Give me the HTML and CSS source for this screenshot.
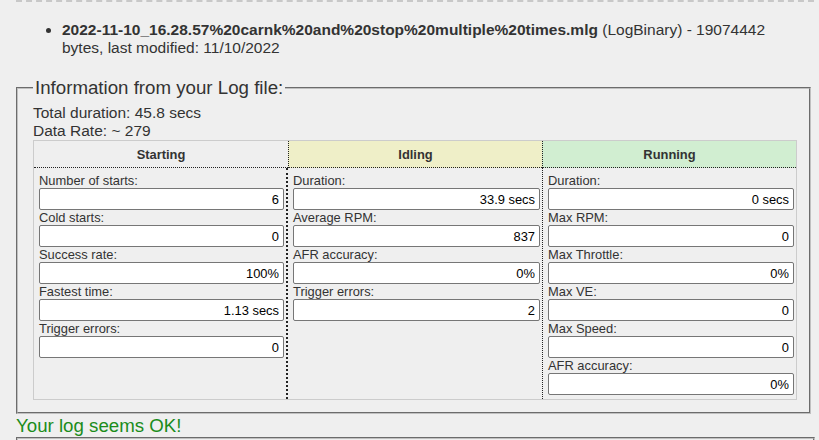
FILE: index.html
```html
<!DOCTYPE html>
<html lang="en">
<head>
<meta charset="utf-8">
<title>Log file information</title>
<link rel="stylesheet" href="styles.css">
</head>
<body>
<div class="page">
  <div class="prev"></div>
  <ul class="files">
    <li><b>2022-11-10_16.28.57%20carnk%20and%20stop%20multiple%20times.mlg</b> (LogBinary) - 19074442 bytes, last modified: 11/10/2022</li>
  </ul>
  <fieldset class="info">
    <legend>Information from your Log file:</legend>
    <div class="summary">Total duration: 45.8 secs<br>Data Rate: ~ 279</div>
    <table class="stats">
      <thead>
        <tr>
          <th class="c-start">Starting</th>
          <th class="c-idle">Idling</th>
          <th class="c-run">Running</th>
        </tr>
      </thead>
      <tbody>
        <tr>
          <td class="c-start">
            <label class="field">Number of starts:<input type="text" readonly value="6"></label>
            <label class="field">Cold starts:<input type="text" readonly value="0"></label>
            <label class="field">Success rate:<input type="text" readonly value="100%"></label>
            <label class="field">Fastest time:<input type="text" readonly value="1.13 secs"></label>
            <label class="field">Trigger errors:<input type="text" readonly value="0"></label>
          </td>
          <td class="c-idle">
            <label class="field">Duration:<input type="text" readonly value="33.9 secs"></label>
            <label class="field">Average RPM:<input type="text" readonly value="837"></label>
            <label class="field">AFR accuracy:<input type="text" readonly value="0%"></label>
            <label class="field">Trigger errors:<input type="text" readonly value="2"></label>
          </td>
          <td class="c-run">
            <label class="field">Duration:<input type="text" readonly value="0 secs"></label>
            <label class="field">Max RPM:<input type="text" readonly value="0"></label>
            <label class="field">Max Throttle:<input type="text" readonly value="0%"></label>
            <label class="field">Max VE:<input type="text" readonly value="0"></label>
            <label class="field">Max Speed:<input type="text" readonly value="0"></label>
            <label class="field">AFR accuracy:<input type="text" readonly value="0%"></label>
          </td>
        </tr>
      </tbody>
    </table>
  </fieldset>
  <p class="ok">Your log seems OK!</p>
  <div class="next"></div>
</div>
</body>
</html>
```

FILE: styles.css
```css
html, body {
  margin: 0;
  padding: 0;
}

body {
  background: #efefef;
  font-family: "Liberation Sans", Arial, sans-serif;
  font-size: 15.5px;
  line-height: 18px;
  color: #333;
  overflow: hidden;
}

.page {
  padding: 0 8px 0 16px;
}

.prev {
  height: 0;
  border-bottom: 2px dashed #c8c8c8;
  margin-right: -3px;
}

.files {
  margin: 19px 0 20px;
  padding-left: 46px;
  padding-right: 30px;
}

.info {
  margin: 0;
  padding: 6px 12px 12px 15px;
  border: 2px groove #c0c0c0;
  min-inline-size: 0;
}

.info legend {
  font-size: 18.7px;
  line-height: 21px;
  padding: 0 2px;
}

.summary {
  margin: 0;
}

.stats {
  width: 100%;
  table-layout: fixed;
  border-collapse: separate;
  border-spacing: 0;
  border: 1px solid #cccccc;
  font-size: 12.9px;
  line-height: 15px;
  color: #333;
}

.stats th {
  height: 26px;
  padding: 0;
  font-weight: bold;
  text-align: center;
  vertical-align: middle;
  border-bottom: 1px dotted #222;
}

.stats th.c-idle {
  background: #efefc8;
  border-left: 1px dotted #222;
}

.stats th.c-run {
  background: #d1eed1;
  border-left: 1px dotted #222;
}

.stats td {
  vertical-align: top;
  padding: 5px 2px 4px 5px;
}

.stats td.c-start {
  border-right: 2px dotted #222;
}

.stats td.c-run {
  border-left: 1px dotted #222;
}

.field {
  display: block;
}

.field input {
  display: block;
  box-sizing: border-box;
  width: 100%;
  height: 22px;
  margin: 0;
  padding: 0 4px;
  border: 1px solid #767676;
  border-radius: 2px;
  background: #fff;
  font-family: "Liberation Sans", Arial, sans-serif;
  font-size: 12.9px;
  color: #000;
  text-align: right;
  outline: none;
}

.ok {
  margin: 0;
  font-size: 18.7px;
  line-height: 23px;
  color: #1b8c1b;
}

.next {
  height: 20px;
  border: 2px groove #c0c0c0;
  border-bottom: none;
  margin-right: -4px;
}
```
